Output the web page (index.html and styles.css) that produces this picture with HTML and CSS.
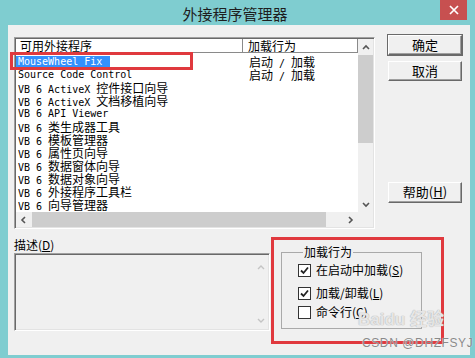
FILE: index.html
```html
<!DOCTYPE html>
<html lang="zh-CN">
<head>
    <meta charset="UTF-8">
    <title>外接程序管理器</title>
    <link rel="stylesheet" href="styles.css">
</head>
<body>
    <div class="window">
        <div class="titlebar">
            <div class="title">外接程序管理器</div>
            <div class="close">
                <svg width="10" height="10" viewBox="0 0 10 10"><path d="M1 1L9 9M9 1L1 9" stroke="#fff" stroke-width="1.7"/></svg>
            </div>
        </div>

        <div class="client">
            <div class="top">
                <!-- add-in list -->
                <div class="listbox">
                    <div class="list-main">
                        <div class="list-head">
                            <div class="hcell h1">可用外接程序</div>
                            <div class="hcell h2">加载行为</div>
                        </div>
                        <div class="rows">
                            <div class="row"><span class="c1"><span class="sel">MouseWheel Fix</span></span><span class="c2"><span class="cn">启动</span> / <span class="cn">加载</span></span></div>
                            <div class="row"><span class="c1">Source Code Control</span><span class="c2"><span class="cn">启动</span> / <span class="cn">加载</span></span></div>
                            <div class="row"><span class="c1">VB 6 ActiveX <span class="cn">控件接口向导</span></span></div>
                            <div class="row"><span class="c1">VB 6 ActiveX <span class="cn">文档移植向导</span></span></div>
                            <div class="row"><span class="c1">VB 6 API Viewer</span></div>
                            <div class="row"><span class="c1">VB 6 <span class="cn">类生成器工具</span></span></div>
                            <div class="row"><span class="c1">VB 6 <span class="cn">模板管理器</span></span></div>
                            <div class="row"><span class="c1">VB 6 <span class="cn">属性页向导</span></span></div>
                            <div class="row"><span class="c1">VB 6 <span class="cn">数据窗体向导</span></span></div>
                            <div class="row"><span class="c1">VB 6 <span class="cn">数据对象向导</span></span></div>
                            <div class="row"><span class="c1">VB 6 <span class="cn">外接程序工具栏</span></span></div>
                            <div class="row"><span class="c1">VB 6 <span class="cn">向导管理器</span></span></div>
                            <div class="row"><span class="c1">VB 6 <span class="cn">应用程序向导</span></span><span class="c2"><span class="cn">启动</span> / <span class="cn">加载</span></span></div>
                        </div>
                        <div class="hscroll">
                            <div class="sbtn">
                                <svg width="7" height="8" viewBox="0 0 7 8"><path d="M5 1L2 4L5 7" stroke="#555" stroke-width="1.6" fill="none"/></svg>
                            </div>
                            <div class="hthumb"></div>
                            <div class="strack"></div>
                            <div class="sbtn">
                                <svg width="7" height="8" viewBox="0 0 7 8"><path d="M2 1L5 4L2 7" stroke="#555" stroke-width="1.6" fill="none"/></svg>
                            </div>
                        </div>
                    </div>
                    <div class="vscroll">
                        <div class="sbtn up">
                            <svg width="8" height="7" viewBox="0 0 8 7"><path d="M1 5L4 2L7 5" stroke="#555" stroke-width="1.6" fill="none"/></svg>
                        </div>
                        <div class="vthumb"></div>
                        <div class="strack"></div>
                        <div class="sbtn">
                            <svg width="8" height="7" viewBox="0 0 8 7"><path d="M1 2L4 5L7 2" stroke="#555" stroke-width="1.6" fill="none"/></svg>
                        </div>
                        <div class="corner"></div>
                    </div>
                </div>

                <div class="buttons">
                    <div class="btn default">确定</div>
                    <div class="btn cancel">取消</div>
                    <div class="btn help">帮助(<u>H</u>)</div>
                </div>
            </div>

            <div class="bottom">
                <div class="desc">
                    <div class="desc-label">描述(<u>D</u>)</div>
                    <div class="desc-box">
                        <div class="desc-text"></div>
                        <div class="desc-scroll">
                            <svg width="8" height="7" viewBox="0 0 8 7"><path d="M1 5L4 2L7 5" stroke="#c4c4c4" stroke-width="1.4" fill="none"/></svg>
                            <svg width="8" height="7" viewBox="0 0 8 7"><path d="M1 2L4 5L7 2" stroke="#c4c4c4" stroke-width="1.4" fill="none"/></svg>
                        </div>
                    </div>
                </div>

                <div class="highlight">
                    <fieldset class="group">
                        <legend>加载行为</legend>
                        <div class="check first">
                            <span class="box"><svg width="11" height="11" viewBox="0 0 11 11"><path d="M2 5.5L4.5 8L9 2.5" stroke="#222" stroke-width="1.8" fill="none"/></svg></span>
                            <span>在启动中加载(<u>S</u>)</span>
                        </div>
                        <div class="check second">
                            <span class="box"><svg width="11" height="11" viewBox="0 0 11 11"><path d="M2 5.5L4.5 8L9 2.5" stroke="#222" stroke-width="1.8" fill="none"/></svg></span>
                            <span>加载/卸载(<u>L</u>)</span>
                        </div>
                        <div class="check third">
                            <span class="box"></span>
                            <span>命令行(<u>C</u>)</span>
                        </div>
                    </fieldset>
                </div>
            </div>
        </div>

        <!-- annotations over the dialog -->
        <div class="mark-row"></div>
        <div class="wm-baidu">Baidu 经验</div>
        <div class="wm-csdn">CSDN @DHZFSYJ</div>
    </div>
</body>
</html>
```

FILE: styles.css
```css
* {
    margin: 0;
    padding: 0;
    box-sizing: border-box;
}

body {
    font-family: "Noto Sans CJK SC", "Liberation Sans", sans-serif;
    font-size: 12px;
    color: #000;
    background: #fff;
}

.window {
    position: relative;
    width: 475px;
    height: 358px;
    background: #7fcdd0;
    overflow: hidden;
}

.titlebar {
    display: flex;
    align-items: flex-start;
    height: 25px;
}

.title {
    flex: 1;
    padding-left: 30px;
    text-align: center;
    font-size: 15px;
    line-height: 27px;
    color: #1e1e1e;
}

.close {
    width: 27px;
    height: 20px;
    margin-right: 8px;
    background: #c75050;
    display: flex;
    align-items: center;
    justify-content: center;
}

.client {
    height: 330px;
    margin: 0 5px 0 8px;
    padding: 10px 0 0 6px;
    background: #f0f0f0;
}

.top {
    display: flex;
    gap: 13px;
}

/* list view */
.listbox {
    display: flex;
    width: 361px;
    height: 192px;
    margin-top: 2px;
    border: 1px solid;
    border-color: #a0a0a0 #fff #fff #a0a0a0;
    box-shadow: inset 1px 1px #696969, inset -1px -1px #e3e3e3;
    padding: 1px;
    background: #fff;
}

.list-main {
    display: flex;
    flex-direction: column;
    width: 342px;
}

.list-head {
    display: flex;
    height: 14px;
    border-bottom: 1px solid #8a8a8a;
    background: #fff;
}

.hcell {
    line-height: 13px;
    font-size: 12px;
    white-space: nowrap;
}

.hcell.h1 {
    width: 227px;
    padding-left: 4px;
    border-right: 1px solid #8a8a8a;
}

.hcell.h2 {
    flex: 1;
    padding-left: 5px;
    border-right: 1px solid #8a8a8a;
}

.rows {
    height: 159px;
    padding-top: 2px;
    overflow: hidden;
    font-family: "DejaVu Sans Mono", "Liberation Mono", monospace;
    font-size: 10px;
}

.row {
    display: flex;
    height: 13px;
    line-height: 13px;
    white-space: pre;
}

.row .c1 {
    width: 227px;
    padding-left: 2px;
}

.row .c2 {
    padding-left: 6px;
}

.cn {
    font-family: "Noto Sans CJK SC", sans-serif;
    font-size: 12px;
}

.sel {
    display: inline-block;
    height: 12px;
    line-height: 12px;
    margin-left: -2px;
    padding: 0 8px 0 2px;
    background: #3390ff;
    color: #fff;
}

/* scroll bars */
.hscroll {
    display: flex;
    height: 15px;
    background: #f0f0f0;
}

.sbtn {
    width: 15px;
    height: 15px;
    display: flex;
    align-items: center;
    justify-content: center;
    background: #f0f0f0;
}

.hthumb {
    width: 294px;
    margin-left: 1px;
    background: #cdcdcd;
}

.strack {
    flex: 1;
    background: #f0f0f0;
}

.vscroll {
    display: flex;
    flex-direction: column;
    width: 15px;
    background: #f0f0f0;
}

.sbtn.up {
    height: 16px;
}

.vthumb {
    height: 88px;
    background: #cdcdcd;
}

.corner {
    height: 15px;
    background: #f0f0f0;
}

/* command buttons */
.buttons {
    display: flex;
    flex-direction: column;
    width: 74px;
}

.btn {
    height: 20px;
    border: 1px solid;
    border-color: #fff #696969 #696969 #fff;
    box-shadow: inset -1px -1px #a0a0a0;
    background: #f0f0f0;
    text-align: center;
    line-height: 17px;
    font-size: 13px;
}

.btn.default {
    outline: 1px solid #6a6a6a;
}

.btn.cancel {
    margin-top: 6px;
}

.btn.help {
    margin-top: 101px;
    height: 21px;
    line-height: 18px;
}

/* description + load behaviour */
.bottom {
    display: flex;
    align-items: flex-start;
    margin-top: 8px;
}

.desc {
    width: 257px;
}

.desc-label {
    height: 16px;
    line-height: 16px;
}

.desc-box {
    display: flex;
    width: 256px;
    height: 78px;
    border: 1px solid;
    border-color: #a0a0a0 #fff #fff #a0a0a0;
    box-shadow: inset 1px 1px #696969, inset -1px -1px #e3e3e3;
    padding: 1px;
    background: #f0f0f0;
}

.desc-text {
    flex: 1;
}

.desc-scroll {
    width: 15px;
    display: flex;
    flex-direction: column;
    align-items: center;
    justify-content: space-between;
    padding: 9px 0 5px;
}

.highlight {
    width: 173px;
    height: 107px;
    border: 3px solid #e0393e;
    padding: 5px 0 0 7px;
}

.group {
    width: 141px;
    height: 84px;
    border: 1px solid #a9a9a9;
    padding: 0 0 0 16px;
}

.group legend {
    margin-left: 5px;
    padding: 0 1px;
    line-height: 14px;
    font-size: 12px;
}

.check {
    display: flex;
    align-items: center;
    height: 16px;
    line-height: 16px;
    white-space: nowrap;
}

.check.first {
    margin-top: 3px;
}

.check.second {
    margin-top: 7px;
}

.check.third {
    margin-top: 3px;
}

.box {
    display: flex;
    align-items: center;
    justify-content: center;
    width: 13px;
    height: 13px;
    margin-right: 5px;
    border: 1px solid #333;
    background: #fff;
}

/* red annotation and watermarks */
.mark-row {
    position: absolute;
    left: 10px;
    top: 52px;
    width: 183px;
    height: 18px;
    border: 3px solid #e0393e;
}

.wm-baidu {
    position: absolute;
    left: 358px;
    top: 310px;
    font-family: "Liberation Sans", "Noto Sans CJK SC", sans-serif;
    font-size: 17px;
    font-weight: bold;
    line-height: 20px;
    color: rgba(255, 255, 255, 0.7);
    text-shadow: 0 0 1px #b0b0b0, 0 0 1px #b0b0b0;
}

.wm-csdn {
    position: absolute;
    left: 362px;
    top: 336px;
    font-family: "Liberation Sans", sans-serif;
    font-size: 12px;
    line-height: 14px;
    color: #8a8a8a;
    letter-spacing: 0.6px;
    text-shadow: 0 0 1px #fff;
}
```
